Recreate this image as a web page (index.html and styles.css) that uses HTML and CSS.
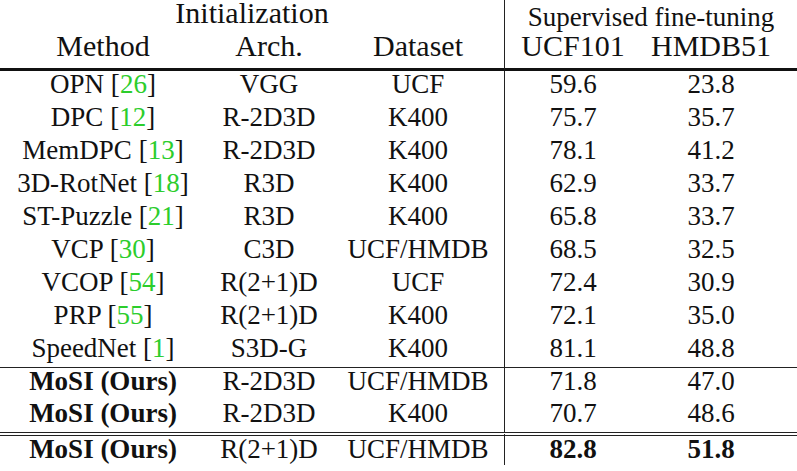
FILE: index.html
```html
<!DOCTYPE html>
<html>
<head>
<meta charset="utf-8">
<link rel="stylesheet" href="styles.css">
</head>
<body>
<table class="results">
  <colgroup>
    <col class="c-method">
    <col class="c-arch">
    <col class="c-data">
    <col class="c-ucf">
    <col class="c-hmdb">
  </colgroup>
  <thead>
    <tr class="head1">
      <th colspan="3" class="sep">Initialization</th>
      <th colspan="2" class="sub">Supervised fine-tuning</th>
    </tr>
    <tr class="head2">
      <th>Method</th>
      <th>Arch.</th>
      <th class="sep">Dataset</th>
      <th>UCF101</th>
      <th class="last">HMDB51</th>
    </tr>
  </thead>
  <tbody>
    <tr><td>OPN [<span class="cite">26</span>]</td><td>VGG</td><td class="sep">UCF</td><td>59.6</td><td class="last">23.8</td></tr>
    <tr><td>DPC [<span class="cite">12</span>]</td><td>R-2D3D</td><td class="sep">K400</td><td>75.7</td><td class="last">35.7</td></tr>
    <tr><td>MemDPC [<span class="cite">13</span>]</td><td>R-2D3D</td><td class="sep">K400</td><td>78.1</td><td class="last">41.2</td></tr>
    <tr><td>3D-RotNet [<span class="cite">18</span>]</td><td>R3D</td><td class="sep">K400</td><td>62.9</td><td class="last">33.7</td></tr>
    <tr><td>ST-Puzzle [<span class="cite">21</span>]</td><td>R3D</td><td class="sep">K400</td><td>65.8</td><td class="last">33.7</td></tr>
    <tr><td>VCP [<span class="cite">30</span>]</td><td>C3D</td><td class="sep">UCF/HMDB</td><td>68.5</td><td class="last">32.5</td></tr>
    <tr><td>VCOP [<span class="cite">54</span>]</td><td>R(2+1)D</td><td class="sep">UCF</td><td>72.4</td><td class="last">30.9</td></tr>
    <tr><td>PRP [<span class="cite">55</span>]</td><td>R(2+1)D</td><td class="sep">K400</td><td>72.1</td><td class="last">35.0</td></tr>
    <tr class="pre-mid"><td>SpeedNet [<span class="cite">1</span>]</td><td>S3D-G</td><td class="sep">K400</td><td>81.1</td><td class="last">48.8</td></tr>
    <tr class="ours mid"><td class="b">MoSI (Ours)</td><td>R-2D3D</td><td class="sep">UCF/HMDB</td><td>71.8</td><td class="last">47.0</td></tr>
    <tr class="ours"><td class="b">MoSI (Ours)</td><td>R-2D3D</td><td class="sep">K400</td><td>70.7</td><td class="last">48.6</td></tr>
    <tr class="ours dbl"><td class="b">MoSI (Ours)</td><td>R(2+1)D</td><td class="sep">UCF/HMDB</td><td class="b">82.8</td><td class="last b">51.8</td></tr>
  </tbody>
</table>
</body>
</html>
```

FILE: styles.css
```css
html, body {
  margin: 0;
  padding: 0;
  background: #ffffff;
}

body {
  width: 797px;
  height: 471px;
  overflow: hidden;
  font-family: "Liberation Serif", "Times New Roman", serif;
  color: #111111;
}

.results {
  width: 797px;
  table-layout: fixed;
  border-collapse: separate;
  border-spacing: 0;
}

.c-method { width: 206px; }
.c-arch { width: 126px; }
.c-data { width: 173px; }
.c-ucf { width: 136px; }
.c-hmdb { width: 156px; }

.results th,
.results td {
  padding: 0;
  text-align: center;
  white-space: nowrap;
  font-weight: normal;
}

.results th {
  font-size: 30px;
  line-height: 25.7px;
}

.head1 th {
  padding-bottom: 7.3px;
}

.head1 th.sub {
  font-size: 27px;
  line-height: 26px;
  padding-top: 4px;
  padding-bottom: 3px;
}

.head2 th {
  padding-bottom: 9.3px;
  border-bottom: 3px solid #111111;
}

.results td {
  font-size: 27px;
  line-height: 26px;
  padding-bottom: 7px;
}

.results .sep {
  border-right: 1.5px solid #222222;
}

.results .last {
  padding-right: 16px;
}

.cite {
  color: #2ccd2c;
}

.results td.b {
  font-weight: bold;
}

.pre-mid td {
  padding-bottom: 6px;
}

.mid td {
  border-top: 1px solid #222222;
}

.ours td {
  padding-bottom: 6px;
}

.dbl td {
  border-top: 4px double #222222;
  padding-bottom: 3px;
}
```
